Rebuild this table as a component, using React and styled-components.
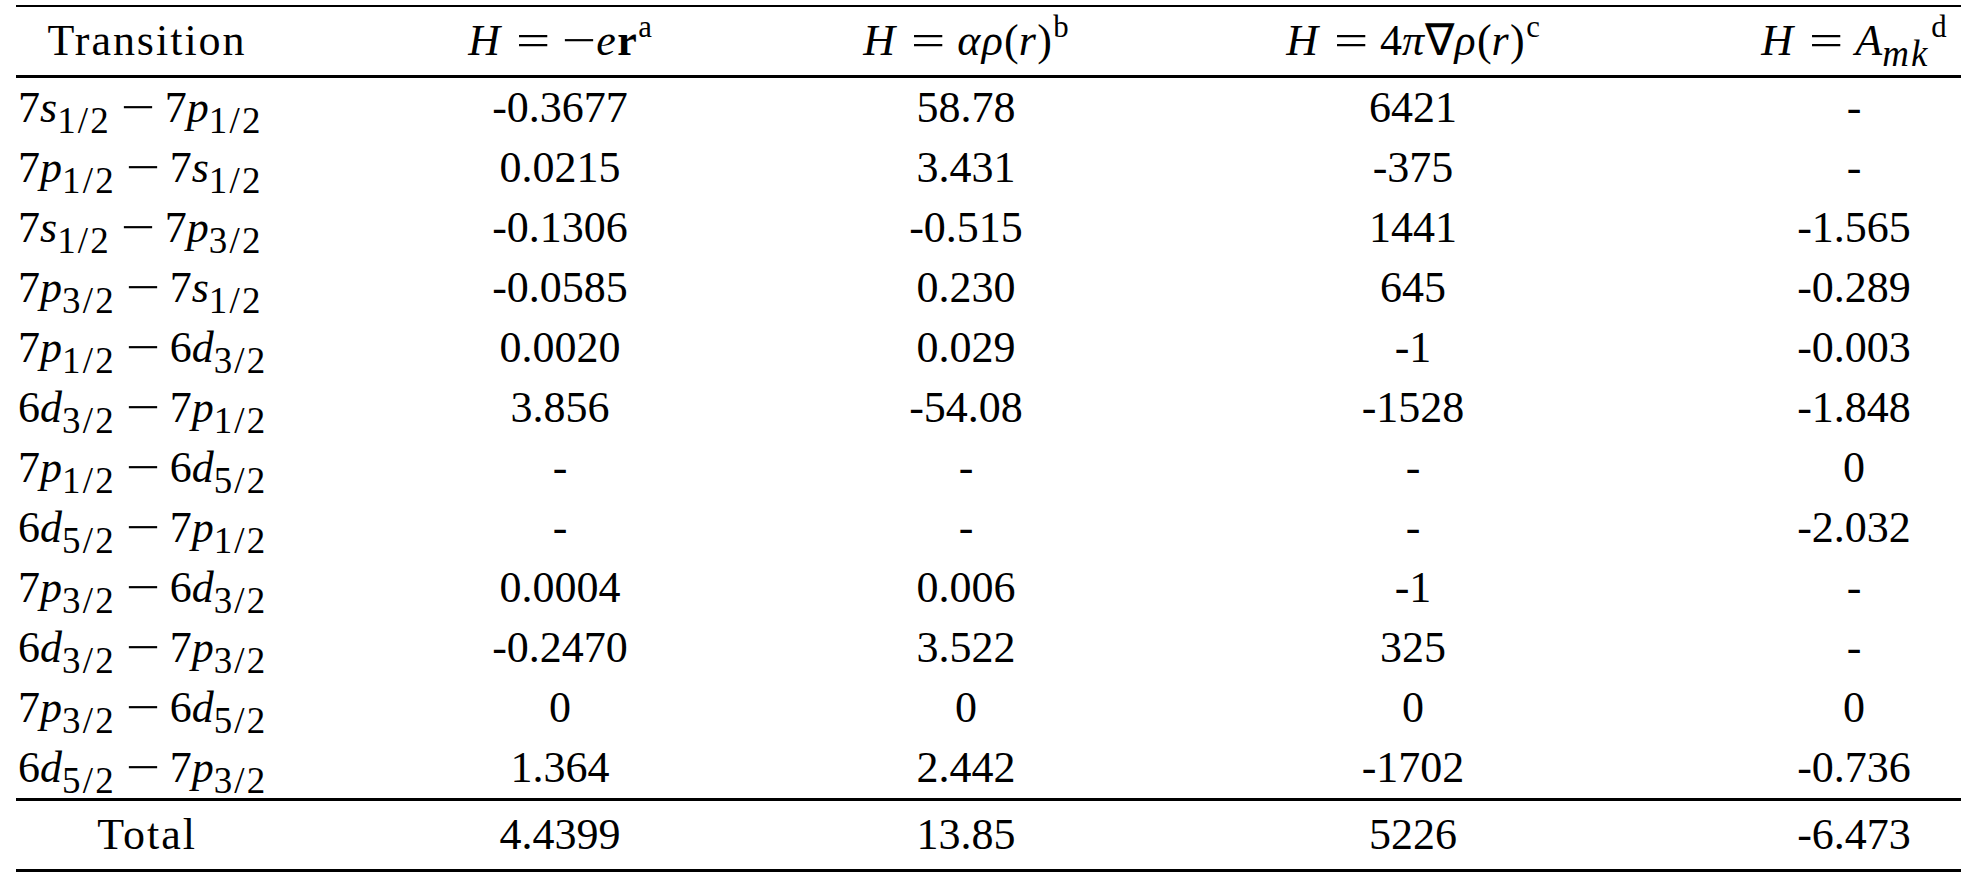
import React from 'react';
import styled, { createGlobalStyle } from 'styled-components';

const Global = createGlobalStyle`
  html, body { margin: 0; padding: 0; background: #fff; overflow: hidden; }
  body { width: 1961px; height: 876px; }
`;

const Page = styled.div`
  width: 1961px;
  height: 876px;
  box-sizing: border-box;
  overflow: hidden;
  padding: 5px 0 0 16px;
  font-family: "Liberation Serif", "Times New Roman", serif;
  font-size: 44px;
  color: #000;
`;

const Table = styled.div`
  display: flex;
  flex-direction: column;
  width: 2041px;
`;

const Row = styled.div`
  display: grid;
  grid-template-columns: 347px 394px 418px 476px 406px;
  align-items: center;
  height: ${(p) => p.$h}px;
  border-top: ${(p) => p.$top || 0}px solid #000;
  border-bottom: ${(p) => p.$bottom || 0}px solid #000;
`;

const Cell = styled.div`
  white-space: nowrap;
  line-height: 1;
  text-align: ${(p) => (p.$left ? 'left' : 'center')};
  padding-left: ${(p) => (p.$left ? '2px' : '0')};
  padding-right: ${(p) => (p.$first && !p.$left ? '85px' : '0')};
`;

const Word = styled.span`
  letter-spacing: 0.045em;
`;

const I = styled.i`
  font-style: italic;
  margin-right: ${(p) => p.$kern || 0}em;
`;

const B = styled.b`
  font-weight: bold;
`;

const Sub = styled.span`
  font-size: 0.84em;
  letter-spacing: 0.06em;
  vertical-align: -0.3em;
  line-height: 0;
`;

const Sup = styled.span`
  font-size: 0.7em;
  vertical-align: 0.6em;
  line-height: 0;
  margin-left: 0.05em;
`;

const Sym = styled.span`
  display: inline-block;
  width: 0.778em;
  text-align: center;
  margin: 0 ${(p) => p.$space || 0}em;
  transform: scaleX(1.38);
`;

const Level = ({ n, l, j }) => (
  <>
    {n}
    <I>{l}</I>
    <Sub>{j}</Sub>
  </>
);

const Transition = ({ a, b }) => (
  <>
    <Level n={a[0]} l={a[1]} j={a[2]} />
    <Sym $space={0.222}>−</Sym>
    <Level n={b[0]} l={b[1]} j={b[2]} />
  </>
);

const rows = [
  [['7', 's', '1/2'], ['7', 'p', '1/2'], '-0.3677', '58.78', '6421', '-'],
  [['7', 'p', '1/2'], ['7', 's', '1/2'], '0.0215', '3.431', '-375', '-'],
  [['7', 's', '1/2'], ['7', 'p', '3/2'], '-0.1306', '-0.515', '1441', '-1.565'],
  [['7', 'p', '3/2'], ['7', 's', '1/2'], '-0.0585', '0.230', '645', '-0.289'],
  [['7', 'p', '1/2'], ['6', 'd', '3/2'], '0.0020', '0.029', '-1', '-0.003'],
  [['6', 'd', '3/2'], ['7', 'p', '1/2'], '3.856', '-54.08', '-1528', '-1.848'],
  [['7', 'p', '1/2'], ['6', 'd', '5/2'], '-', '-', '-', '0'],
  [['6', 'd', '5/2'], ['7', 'p', '1/2'], '-', '-', '-', '-2.032'],
  [['7', 'p', '3/2'], ['6', 'd', '3/2'], '0.0004', '0.006', '-1', '-'],
  [['6', 'd', '3/2'], ['7', 'p', '3/2'], '-0.2470', '3.522', '325', '-'],
  [['7', 'p', '3/2'], ['6', 'd', '5/2'], '0', '0', '0', '0'],
  [['6', 'd', '5/2'], ['7', 'p', '3/2'], '1.364', '2.442', '-1702', '-0.736'],
];

const totals = ['4.4399', '13.85', '5226', '-6.473'];

const HEq = () => (
  <>
    <I $kern={0.08}>H</I>
    <Sym $space={0.278}>=</Sym>
  </>
);

export default function App() {
  return (
    <Page>
      <Global />
      <Table>
        <Row $h={68} $top={2} $bottom={3}>
          <Cell $first>
            <Word>Transition</Word>
          </Cell>
          <Cell>
            <HEq />
            <Sym>−</Sym>
            <I $kern={0.03}>e</I>
            <B>r</B>
            <Sup>a</Sup>
          </Cell>
          <Cell>
            <HEq />
            <I $kern={0.03}>α</I>
            <I $kern={0.03}>ρ</I>(<I $kern={0.03}>r</I>)<Sup>b</Sup>
          </Cell>
          <Cell>
            <HEq />4<I $kern={0.03}>π</I>∇<I $kern={0.03}>ρ</I>(<I $kern={0.03}>r</I>)<Sup>c</Sup>
          </Cell>
          <Cell>
            <HEq />
            <I>A</I>
            <Sub>
              <I>mk</I>
            </Sub>
            <Sup>d</Sup>
          </Cell>
        </Row>
        {rows.map((r, i) => (
          <Row key={i} $h={60}>
            <Cell $first $left>
              <Transition a={r[0]} b={r[1]} />
            </Cell>
            <Cell>{r[2]}</Cell>
            <Cell>{r[3]}</Cell>
            <Cell>{r[4]}</Cell>
            <Cell>{r[5]}</Cell>
          </Row>
        ))}
        <Row $h={68} $top={3} $bottom={3}>
          <Cell $first>
            <Word>Total</Word>
          </Cell>
          {totals.map((t, i) => (
            <Cell key={i}>{t}</Cell>
          ))}
        </Row>
      </Table>
    </Page>
  );
}
